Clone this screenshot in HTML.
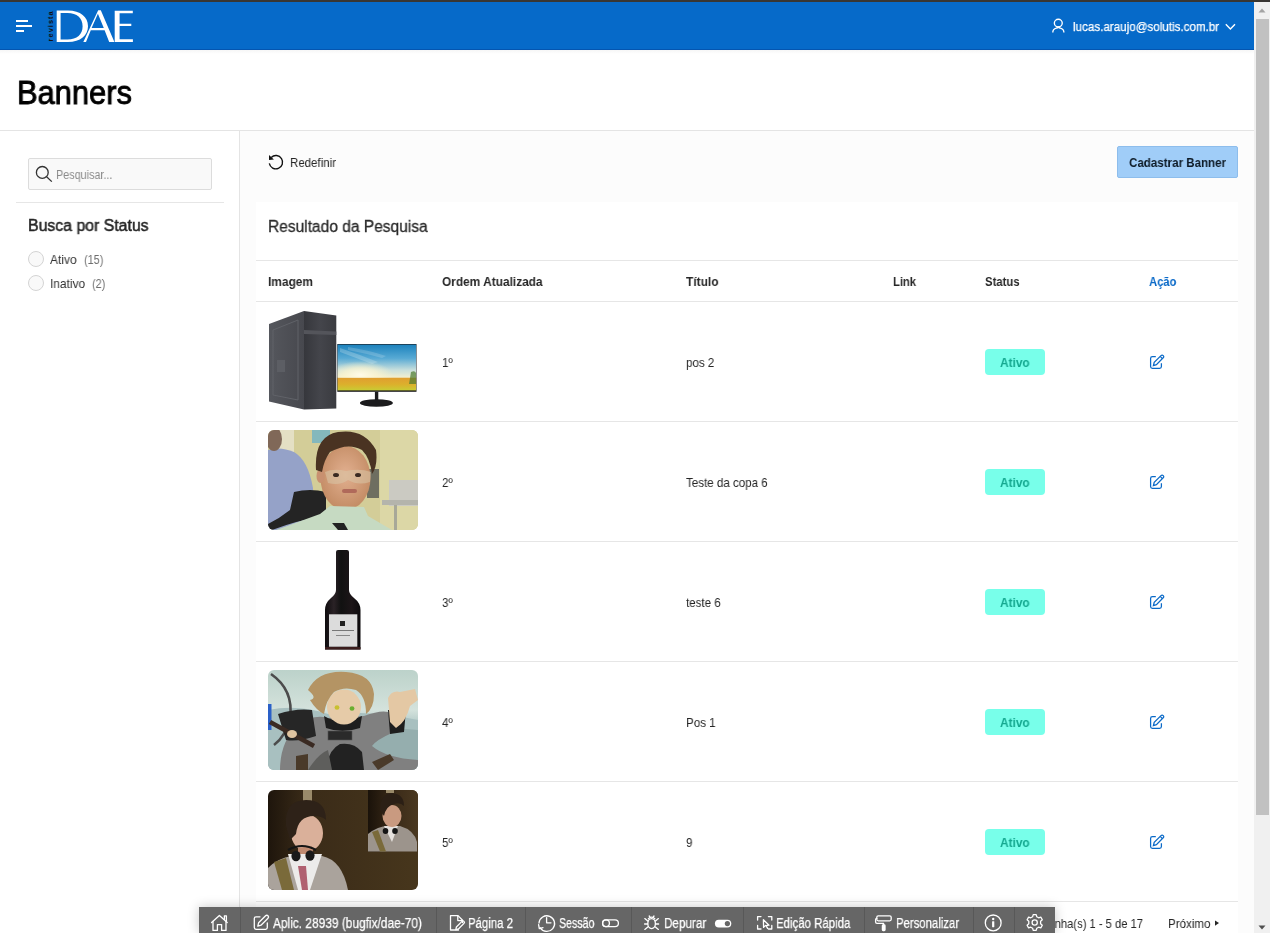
<!DOCTYPE html>
<html><head><meta charset="utf-8">
<style>
*{box-sizing:border-box;margin:0;padding:0}
html,body{width:1270px;height:933px;overflow:hidden;background:#fff;font-family:"Liberation Sans",sans-serif;color:#262626}
.abs{position:absolute}
.t{position:absolute;white-space:nowrap;line-height:1;transform-origin:0 0;will-change:transform}
svg{overflow:visible}
</style></head>
<body>
<div class="abs" style="left:0;top:0;width:1270px;height:2px;background:#383633"></div>
<div class="abs" style="left:0;top:50px;width:1254px;height:4px;background:linear-gradient(#f6f6f6,#fff)"></div>
<div class="abs" style="left:0;top:2px;width:1254px;height:48px;background:#066ac9;border-bottom:1px solid #0455b0"></div>
<div class="abs" style="left:16px;top:19.5px;width:12px;height:2px;background:#fff"></div>
<div class="abs" style="left:16px;top:25px;width:16px;height:2px;background:#fff"></div>
<div class="abs" style="left:16px;top:30px;width:8px;height:2px;background:#fff"></div>
<svg class="abs" style="left:46px;top:8px" width="90" height="36" viewBox="46 8 90 36">
<g fill="#fff">
<path d="M56.7 10.6 H68 C80.5 10.6 88 17.2 88 26.2 C88 35.3 80.5 41.9 68 41.9 H56.7 Z M60.6 13 V39.5 H67.5 C77 39.5 82.6 34.3 82.6 26.2 C82.6 18.1 77 13 67.5 13 Z"/>
<path d="M98.2 10.2 H100.8 L114.4 41.9 H109.2 L104.6 30.2 H90.8 L86 41.9 H83.3 Z M91.6 28.1 H103.8 L97.9 13.8 Z"/>
<path d="M114.7 10.7 H132.8 V13.2 H119.6 V23.8 H131.3 V26 H119.6 V39.3 H132.9 V41.9 H114.7 Z"/>
</g>
<text x="0" y="0" transform="translate(53.2 41.4) rotate(-90)" font-family="Liberation Sans" font-weight="bold" font-size="7.4" letter-spacing="1.05" fill="#111">revista</text>
</svg>
<svg class="abs" style="left:1048px;top:15px" width="20" height="22" viewBox="1048 15 20 22">
<g fill="none" stroke="#fff" stroke-width="1.35">
<ellipse cx="1058.3" cy="23.1" rx="3.95" ry="3.85"/>
<path d="M1052.8 32.6 C1052.8 29.6 1054.5 28.6 1056.3 28.2 C1057.2 28 1057.8 27.6 1058.3 27 C1058.8 27.6 1059.4 28 1060.3 28.2 C1062.1 28.6 1063.9 29.6 1063.9 32.6"/>
</g></svg>
<div class="t" style="left:1072.5px;top:21.2px;font-size:12.5px;color:#fff;transform:scaleX(0.93);-webkit-text-stroke:0.25px #fff;">lucas.araujo@solutis.com.br</div>

<svg class="abs" style="left:1222px;top:20px" width="16" height="14" viewBox="1222 20 16 14">
<path d="M1225.8 24.2 L1230.4 29 L1235 24.2" fill="none" stroke="#fff" stroke-width="1.4"/></svg>
<div class="abs" style="left:1254px;top:2px;width:16px;height:931px;background:#f0f0f0"></div>
<div class="abs" style="left:1256px;top:19px;width:13px;height:796px;background:#c1c1c1"></div>
<svg class="abs" style="left:1254px;top:2px" width="16" height="931" viewBox="0 0 16 931">
<path d="M4.5 10.5 L8 6.5 L11.5 10.5 Z" fill="#a3a3a3"/>
<path d="M4.5 923.5 L8 927.5 L11.5 923.5 Z" fill="#505050"/></svg>
<div class="abs" style="left:0;top:130px;width:1254px;height:1px;background:#e4e4e4"></div>
<div class="t" style="left:17.4px;top:75.7px;font-size:33px;color:#000;transform:scaleX(0.935);-webkit-text-stroke:0.9px #000;">Banners</div>

<div class="abs" style="left:239px;top:131px;width:1px;height:802px;background:#e4e4e4"></div>
<div class="abs" style="left:240px;top:131px;width:1014px;height:802px;background:#fcfcfc"></div>
<div class="abs" style="left:28px;top:158px;width:184px;height:32px;background:#f9f9f9;border:1px solid #dcdcdc;border-radius:2px"></div>
<svg class="abs" style="left:33px;top:163px" width="22" height="22" viewBox="33 163 22 22">
<g fill="none" stroke="#333" stroke-width="1.3"><circle cx="42.3" cy="172.4" r="5.9"/><path d="M46.6 176.7 L51.8 181.6"/></g></svg>
<div class="t" style="left:56.2px;top:168.8px;font-size:12px;color:#8a8a8a;transform:scaleX(0.9);">Pesquisar...</div>

<div class="abs" style="left:16px;top:202px;width:208px;height:1px;background:#e6e6e6"></div>
<div class="t" style="left:27.6px;top:217.5px;font-size:16px;color:#262626;transform:scaleX(0.99);-webkit-text-stroke:0.5px #262626;">Busca por Status</div>

<div class="abs" style="left:28px;top:251px;width:16px;height:16px;border:1px solid #d4d4d4;border-radius:50%;background:#f9f9f9"></div>
<div class="t" style="left:49.5px;top:253.0px;font-size:13px;color:#333;transform:scaleX(0.92);">Ativo</div>

<div class="t" style="left:83.5px;top:253.0px;font-size:13px;color:#6e6e6e;transform:scaleX(0.84);">(15)</div>

<div class="abs" style="left:28px;top:275px;width:16px;height:16px;border:1px solid #d4d4d4;border-radius:50%;background:#f9f9f9"></div>
<div class="t" style="left:49.5px;top:277.0px;font-size:13px;color:#333;transform:scaleX(0.92);">Inativo</div>

<div class="t" style="left:91.5px;top:277.0px;font-size:13px;color:#6e6e6e;transform:scaleX(0.84);">(2)</div>

<svg class="abs" style="left:264px;top:150px" width="24" height="24" viewBox="264 150 24 24">
<path d="M271.2 157.4 A6.7 6.7 0 1 1 269.3 163.4" fill="none" stroke="#111" stroke-width="1.35"/>
<path d="M269 155 L269 159.9 L273.9 159.5 Z" fill="#111"/></svg>
<div class="t" style="left:290.2px;top:155.9px;font-size:13px;color:#262626;transform:scaleX(0.885);">Redefinir</div>

<div class="abs" style="left:1117px;top:146px;width:121px;height:32px;background:#a0cdf8;border:1px solid #8dbdec;border-radius:2px"></div>
<div class="t" style="left:1128.8px;top:156.3px;font-size:13px;font-weight:bold;color:#0d1a26;transform:scaleX(0.89);">Cadastrar Banner</div>

<div class="abs" style="left:256px;top:202px;width:982px;height:731px;background:#fff"></div>
<div class="t" style="left:268.0px;top:218.5px;font-size:16px;color:#2b2b2b;transform:scaleX(0.97);-webkit-text-stroke:0.3px #2b2b2b;">Resultado da Pesquisa</div>

<div class="abs" style="left:256px;top:260px;width:982px;height:1px;background:#e6e6e6"></div>
<div class="abs" style="left:256px;top:301px;width:982px;height:1px;background:#e6e6e6"></div>
<div class="t" style="left:268.0px;top:275.3px;font-size:13px;font-weight:bold;color:#262626;transform:scaleX(0.916);">Imagem</div>

<div class="t" style="left:442.0px;top:275.3px;font-size:13px;font-weight:bold;color:#262626;transform:scaleX(0.914);">Ordem Atualizada</div>

<div class="t" style="left:686.0px;top:275.3px;font-size:13px;font-weight:bold;color:#262626;transform:scaleX(0.919);">Título</div>

<div class="t" style="left:893.0px;top:275.3px;font-size:13px;font-weight:bold;color:#262626;transform:scaleX(0.861);">Link</div>

<div class="t" style="left:985.0px;top:275.3px;font-size:13px;font-weight:bold;color:#262626;transform:scaleX(0.871);">Status</div>

<div class="t" style="left:1148.5px;top:275.3px;font-size:13px;font-weight:bold;color:#0b6ac8;transform:scaleX(0.865);">Ação</div>

<div class="abs" style="left:256px;top:421px;width:982px;height:1px;background:#e6e6e6"></div>
<div class="t" style="left:442.0px;top:356.1px;font-size:13px;color:#262626;transform:scaleX(0.89);">1º</div>

<div class="t" style="left:686.0px;top:356.1px;font-size:13px;color:#262626;transform:scaleX(0.89);">pos 2</div>

<div class="abs" style="left:985px;top:349px;width:60px;height:26px;background:#78ffea;border-radius:4px"></div>
<div class="t" style="left:1000.3px;top:357.0px;font-size:12.5px;font-weight:bold;color:#14a88f;transform:scaleX(0.95);">Ativo</div>

<svg class="abs" style="left:1146px;top:352px" width="22" height="22" viewBox="1146 352 22 22">
<g fill="none" stroke="#0b6ac8" stroke-width="1.25" transform="translate(0 0)">
<path d="M1155.8 356.6 H1152.4 Q1150.6 356.6 1150.6 358.4 V366.6 Q1150.6 368.4 1152.4 368.4 H1159.6 Q1161.4 368.4 1161.4 366.6 V363.2"/>
<path d="M1153.4 365.6 L1154.2 362.4 L1161 355.6 Q1162.1 354.5 1163.2 355.6 Q1164.3 356.7 1163.2 357.8 L1156.4 364.6 Z"/>
<path d="M1160.2 356.4 L1162.4 358.6"/>
</g></svg>
<div class="abs" style="left:256px;top:541px;width:982px;height:1px;background:#e6e6e6"></div>
<div class="t" style="left:442.0px;top:476.1px;font-size:13px;color:#262626;transform:scaleX(0.89);">2º</div>

<div class="t" style="left:686.0px;top:476.1px;font-size:13px;color:#262626;transform:scaleX(0.89);">Teste da copa 6</div>

<div class="abs" style="left:985px;top:469px;width:60px;height:26px;background:#78ffea;border-radius:4px"></div>
<div class="t" style="left:1000.3px;top:477.0px;font-size:12.5px;font-weight:bold;color:#14a88f;transform:scaleX(0.95);">Ativo</div>

<svg class="abs" style="left:1146px;top:472px" width="22" height="22" viewBox="1146 472 22 22">
<g fill="none" stroke="#0b6ac8" stroke-width="1.25" transform="translate(0 120)">
<path d="M1155.8 356.6 H1152.4 Q1150.6 356.6 1150.6 358.4 V366.6 Q1150.6 368.4 1152.4 368.4 H1159.6 Q1161.4 368.4 1161.4 366.6 V363.2"/>
<path d="M1153.4 365.6 L1154.2 362.4 L1161 355.6 Q1162.1 354.5 1163.2 355.6 Q1164.3 356.7 1163.2 357.8 L1156.4 364.6 Z"/>
<path d="M1160.2 356.4 L1162.4 358.6"/>
</g></svg>
<div class="abs" style="left:256px;top:661px;width:982px;height:1px;background:#e6e6e6"></div>
<div class="t" style="left:442.0px;top:596.1px;font-size:13px;color:#262626;transform:scaleX(0.89);">3º</div>

<div class="t" style="left:686.0px;top:596.1px;font-size:13px;color:#262626;transform:scaleX(0.89);">teste 6</div>

<div class="abs" style="left:985px;top:589px;width:60px;height:26px;background:#78ffea;border-radius:4px"></div>
<div class="t" style="left:1000.3px;top:597.0px;font-size:12.5px;font-weight:bold;color:#14a88f;transform:scaleX(0.95);">Ativo</div>

<svg class="abs" style="left:1146px;top:592px" width="22" height="22" viewBox="1146 592 22 22">
<g fill="none" stroke="#0b6ac8" stroke-width="1.25" transform="translate(0 240)">
<path d="M1155.8 356.6 H1152.4 Q1150.6 356.6 1150.6 358.4 V366.6 Q1150.6 368.4 1152.4 368.4 H1159.6 Q1161.4 368.4 1161.4 366.6 V363.2"/>
<path d="M1153.4 365.6 L1154.2 362.4 L1161 355.6 Q1162.1 354.5 1163.2 355.6 Q1164.3 356.7 1163.2 357.8 L1156.4 364.6 Z"/>
<path d="M1160.2 356.4 L1162.4 358.6"/>
</g></svg>
<div class="abs" style="left:256px;top:781px;width:982px;height:1px;background:#e6e6e6"></div>
<div class="t" style="left:442.0px;top:716.1px;font-size:13px;color:#262626;transform:scaleX(0.89);">4º</div>

<div class="t" style="left:686.0px;top:716.1px;font-size:13px;color:#262626;transform:scaleX(0.89);">Pos 1</div>

<div class="abs" style="left:985px;top:709px;width:60px;height:26px;background:#78ffea;border-radius:4px"></div>
<div class="t" style="left:1000.3px;top:717.0px;font-size:12.5px;font-weight:bold;color:#14a88f;transform:scaleX(0.95);">Ativo</div>

<svg class="abs" style="left:1146px;top:712px" width="22" height="22" viewBox="1146 712 22 22">
<g fill="none" stroke="#0b6ac8" stroke-width="1.25" transform="translate(0 360)">
<path d="M1155.8 356.6 H1152.4 Q1150.6 356.6 1150.6 358.4 V366.6 Q1150.6 368.4 1152.4 368.4 H1159.6 Q1161.4 368.4 1161.4 366.6 V363.2"/>
<path d="M1153.4 365.6 L1154.2 362.4 L1161 355.6 Q1162.1 354.5 1163.2 355.6 Q1164.3 356.7 1163.2 357.8 L1156.4 364.6 Z"/>
<path d="M1160.2 356.4 L1162.4 358.6"/>
</g></svg>
<div class="abs" style="left:256px;top:901px;width:982px;height:1px;background:#e6e6e6"></div>
<div class="t" style="left:442.0px;top:836.1px;font-size:13px;color:#262626;transform:scaleX(0.89);">5º</div>

<div class="t" style="left:686.0px;top:836.1px;font-size:13px;color:#262626;transform:scaleX(0.89);">9</div>

<div class="abs" style="left:985px;top:829px;width:60px;height:26px;background:#78ffea;border-radius:4px"></div>
<div class="t" style="left:1000.3px;top:837.0px;font-size:12.5px;font-weight:bold;color:#14a88f;transform:scaleX(0.95);">Ativo</div>

<svg class="abs" style="left:1146px;top:832px" width="22" height="22" viewBox="1146 832 22 22">
<g fill="none" stroke="#0b6ac8" stroke-width="1.25" transform="translate(0 480)">
<path d="M1155.8 356.6 H1152.4 Q1150.6 356.6 1150.6 358.4 V366.6 Q1150.6 368.4 1152.4 368.4 H1159.6 Q1161.4 368.4 1161.4 366.6 V363.2"/>
<path d="M1153.4 365.6 L1154.2 362.4 L1161 355.6 Q1162.1 354.5 1163.2 355.6 Q1164.3 356.7 1163.2 357.8 L1156.4 364.6 Z"/>
<path d="M1160.2 356.4 L1162.4 358.6"/>
</g></svg>
<svg class="abs" style="left:268px;top:310px" width="150" height="100" viewBox="0 0 150 100">
<defs>
<linearGradient id="scr" x1="0" y1="0" x2="0" y2="1">
<stop offset="0" stop-color="#1c82bd"/><stop offset=".3" stop-color="#58aad4"/><stop offset=".55" stop-color="#c6dedc"/><stop offset=".71" stop-color="#f0eed0"/><stop offset=".74" stop-color="#e0a030"/><stop offset=".87" stop-color="#dcb02c"/><stop offset="1" stop-color="#c8cc34"/>
</linearGradient>
<radialGradient id="sun" cx=".29" cy=".92" r=".42"><stop offset="0" stop-color="#fffbe8"/><stop offset=".5" stop-color="#fff6d0" stop-opacity=".7"/><stop offset="1" stop-color="#fff6d0" stop-opacity="0"/></radialGradient>
<linearGradient id="side" x1="0" y1="0" x2="1" y2="0"><stop offset="0" stop-color="#55575d"/><stop offset="1" stop-color="#47484e"/></linearGradient>
<linearGradient id="front" x1="0" y1="0" x2="1" y2="0"><stop offset="0" stop-color="#36373c"/><stop offset=".5" stop-color="#44454b"/><stop offset="1" stop-color="#3a3b40"/></linearGradient>
</defs>
<polygon points="1,14 36,1 36,99.5 1,91.5" fill="url(#side)"/>
<polygon points="5,20 30,10 30,90 5,85" fill="none" stroke="#606268" stroke-width="1"/>
<rect x="9" y="50" width="8" height="12" fill="#5c5e64"/>
<polygon points="36,1 68.3,5.5 68.3,98.5 36,99.5" fill="url(#front)"/>
<polygon points="36,20 68.3,21.5 68.3,25 36,24" fill="#54555b"/>
<rect x="69.3" y="34" width="79.2" height="47.8" fill="#1b1b1d"/>
<rect x="69.6" y="34.6" width="78.5" height="45.8" fill="url(#scr)"/>
<rect x="69.6" y="34.6" width="78.5" height="33" fill="url(#sun)"/>
<path d="M72 38 Q90 44 110 52 L104 54 Q88 48 72 42 Z" fill="#e8f2f4" opacity=".25"/>
<path d="M80 37 Q100 40 118 46 L114 48 Q96 43 80 40 Z" fill="#e8f2f4" opacity=".2"/>
<path d="M143 62 Q147 60 148 63 L148 74 L141 74 Z" fill="#4a7a30" opacity=".7"/>
<rect x="106.9" y="81.8" width="3.4" height="9" fill="#1b1b1d"/>
<ellipse cx="108.4" cy="93" rx="16.5" ry="3.8" fill="#1b1b1d"/>
</svg>

<svg class="abs" style="left:268px;top:430px" width="150" height="100" viewBox="0 0 150 100">
<defs><clipPath id="c2"><rect x="0" y="0" width="150" height="100" rx="6"/></clipPath>
<radialGradient id="face2" cx=".5" cy=".45" r=".6"><stop offset="0" stop-color="#e2b090"/><stop offset="1" stop-color="#c08860"/></radialGradient></defs>
<g clip-path="url(#c2)">
<rect width="150" height="100" fill="#d3cd98"/>
<rect x="10" y="0" width="16" height="60" fill="#e4e0c4"/>
<rect x="112" y="0" width="38" height="100" fill="#dcd7a6"/>
<rect x="44" y="0" width="18" height="13" fill="#84b8bc"/>
<path d="M0 20 Q12 16 26 22 Q40 30 45 58 L46 100 L0 100 Z" fill="#95a2c8"/>
<ellipse cx="6" cy="9" rx="8" ry="12" fill="#806858"/>
<path d="M26 62 Q42 58 58 62 L58 86 Q30 90 4 100 L0 100 L0 94 Q12 88 22 80 Z" fill="#242424"/>
<rect x="99" y="39" width="12" height="29" fill="#6e6e60"/>
<rect x="121" y="50" width="29" height="26" fill="#cbcac2"/>
<rect x="114" y="70" width="36" height="5" fill="#b4b4ac"/>
<rect x="126" y="75" width="3" height="25" fill="#a8a898"/>
<ellipse cx="77.5" cy="48" rx="25" ry="32" fill="url(#face2)"/>
<ellipse cx="52.5" cy="46" rx="4" ry="7" fill="#c89070"/>
<path d="M48 40 Q46 6 70 2 Q96 -2 108 20 Q110 36 104 44 Q102 28 94 20 Q80 12 62 22 Q56 30 54 42 Z" fill="#4a3322"/>
<path d="M57 42 Q66 38 78 41 Q92 38 103 42 L102 52 Q90 56 80 50 Q72 56 60 53 Z" fill="#d9c7a8" opacity=".55"/>
<ellipse cx="68" cy="45" rx="3" ry="2" fill="#3a2a22"/><ellipse cx="90" cy="45" rx="3" ry="2" fill="#3a2a22"/>
<rect x="74" y="59" width="15" height="4" rx="2" fill="#b06a5a"/>
<path d="M8 100 L52 84 L62 76 L96 77 L100 86 L124 100 Z" fill="#c6dac2"/>
<path d="M64 93 L70 100 L80 100 L76 93 Z" fill="#222"/>
</g></svg>

<svg class="abs" style="left:268px;top:550px" width="150" height="100" viewBox="0 0 150 100">
<defs><linearGradient id="bt" x1="0" y1="0" x2="1" y2="0"><stop offset="0" stop-color="#0e0c0e"/><stop offset=".25" stop-color="#2a2226"/><stop offset=".45" stop-color="#111"/><stop offset=".75" stop-color="#1c1518"/><stop offset="1" stop-color="#0c0a0c"/></linearGradient></defs>
<path d="M68 2 Q68 0 70 0 H79 Q81 0 81 2 V40 Q81 44 86 48 Q92.5 53 92.5 60 V99.5 H57 V60 Q57 53 63 48 Q68 44 68 40 Z" fill="url(#bt)"/>
<rect x="61" y="64.3" width="28.3" height="32.4" fill="#dcdcdc"/>
<rect x="72" y="71" width="5" height="5" fill="#222"/>
<rect x="64" y="80" width="22" height="1" fill="#777"/>
<rect x="68" y="85" width="14" height="1" fill="#888"/>
<rect x="57" y="97" width="35.5" height="2.5" fill="#3a1c1c"/>
</svg>

<svg class="abs" style="left:268px;top:670px" width="150" height="100" viewBox="0 0 150 100">
<defs><clipPath id="c4"><rect x="0" y="0" width="150" height="100" rx="6"/></clipPath>
<linearGradient id="sky4" x1="0" y1="0" x2="0" y2="1"><stop offset="0" stop-color="#bcd2ca"/><stop offset=".4" stop-color="#d4e2dc"/><stop offset=".55" stop-color="#b0c8c6"/><stop offset="1" stop-color="#9cb4b4"/></linearGradient></defs>
<g clip-path="url(#c4)">
<rect width="150" height="100" fill="url(#sky4)"/>
<path d="M0 40 Q30 34 60 44 Q100 40 150 50 L150 100 L0 100 Z" fill="#a8c0c0"/>
<path d="M90 62 Q120 56 150 60 L150 100 L90 100 Z" fill="#95aeae"/>
<rect x="0" y="34" width="3.5" height="26" fill="#2a60c8"/>
<path d="M3 4 Q26 20 22 48 Q18 66 6 75" fill="none" stroke="#4c4c4c" stroke-width="2.6"/>
<path d="M12 100 Q12 72 30 54 Q46 44 60 48 L96 46 Q112 40 120 42 L126 62 Q108 70 104 76 Q118 88 150 90 L150 100 Z" fill="#808080"/>
<path d="M10 44 Q28 38 44 40 L48 66 Q30 72 18 70 Z" fill="#262626"/>
<path d="M2 52 L46 76" stroke="#3a2a22" stroke-width="4.5"/>
<ellipse cx="24" cy="64" rx="5" ry="4" fill="#e0c4a0"/>
<path d="M58 100 Q60 80 72 74 Q86 72 94 82 L96 100 Z" fill="#222"/>
<path d="M40 100 Q50 84 60 80 L64 100 Z" fill="#5e5e5c"/>
<path d="M56 46 Q72 56 94 46 L92 58 Q74 64 58 58 Z" fill="#1e1e1e"/>
<rect x="60" y="61" width="24" height="9" fill="#2a2a2a" stroke="#555" stroke-width=".6"/>
<path d="M120 40 L138 40 L136 62 L122 64 Z" fill="#1e1e1e"/>
<path d="M120 28 Q124 20 132 22 L147 19 L150 30 L142 36 Q138 52 128 58 L122 52 Z" fill="#e4c8a4"/>
<ellipse cx="76" cy="37" rx="17" ry="17.5" fill="#e6cba8"/>
<path d="M40 20 Q50 0 78 2 Q104 4 106 24 Q106 38 98 44 Q98 26 88 20 Q76 16 66 22 Q58 30 56 44 Q48 40 42 30 Q50 28 40 20 Z" fill="#b49464"/>
<ellipse cx="69" cy="37.5" rx="2.4" ry="2.2" fill="#c8c030"/><ellipse cx="84" cy="38.5" rx="2.4" ry="2.2" fill="#6aae30"/>
<path d="M28 86 L40 84 L40 100 L28 100 Z" fill="#4a3a2a"/>
<path d="M104 92 L122 84 L126 90 L110 100 Z" fill="#4a3a2a"/>
</g></svg>

<svg class="abs" style="left:268px;top:790px" width="150" height="100" viewBox="0 0 150 100">
<defs><clipPath id="c5"><rect x="0" y="0" width="150" height="100" rx="6"/></clipPath>
<linearGradient id="bg5" x1="0" y1="0" x2="1" y2="0"><stop offset="0" stop-color="#1e150c"/><stop offset=".25" stop-color="#3a2b18"/><stop offset="1" stop-color="#47361c"/></linearGradient>
<linearGradient id="bg5b" x1="0" y1="0" x2="1" y2="0"><stop offset="0" stop-color="#1a120a"/><stop offset=".5" stop-color="#3a2a18"/><stop offset="1" stop-color="#4a3820"/></linearGradient></defs>
<g clip-path="url(#c5)">
<rect width="150" height="100" fill="url(#bg5)"/>
<rect x="35" y="0" width="9" height="11" fill="#9a8a6a"/>
<rect x="100" y="0" width="50" height="61.5" fill="url(#bg5b)"/>
<rect x="118" y="0" width="8" height="3" fill="#9a8a6a"/>
<path d="M100 61.5 L100 44 Q110 36 120 36 L132 36 Q146 40 149 52 L149 61.5 Z" fill="#9c948c"/>
<path d="M116 36 L124 52 L130 36 Z" fill="#e6e2de"/>
<path d="M104 42 L110 40 L118 61.5 L112 61.5 Z" fill="#7a6a3a"/>
<ellipse cx="124" cy="26" rx="9.5" ry="11" fill="#c99a80"/>
<path d="M112 20 Q112 4 124 3 Q136 4 136 16 Q132 12 126 14 Q118 16 116 26 Z" fill="#2b1f15"/>
<ellipse cx="117.5" cy="41" rx="2.8" ry="3" fill="#151515"/><ellipse cx="127" cy="41" rx="2.8" ry="3" fill="#151515"/>
<ellipse cx="39" cy="43" rx="16" ry="18.5" fill="#dab09a"/>
<path d="M18 36 Q16 10 38 10 Q58 10 58 30 Q54 26 46 26 Q30 26 28 44 L22 50 Z" fill="#2e2218"/>
<path d="M30 58 L44 56 L46 68 L30 70 Z" fill="#c08a70"/>
<path d="M0 100 L0 78 Q10 68 24 66 L54 66 Q74 70 80 100 Z" fill="#aaa39c"/>
<path d="M20 64 L54 64 L42 100 L30 100 Z" fill="#ecebea"/>
<path d="M6 72 L18 68 L26 100 L14 100 Z" fill="#7a6a3a"/>
<path d="M30 76 L38 76 L40 100 L34 100 Z" fill="#b06070"/>
<path d="M20 60 Q34 52 48 60" fill="none" stroke="#151515" stroke-width="2.2"/><ellipse cx="28" cy="66" rx="4.6" ry="5.2" fill="#1a1a1a"/><ellipse cx="42" cy="65.5" rx="4.6" ry="5.2" fill="#1a1a1a"/>
</g></svg>

<div class="t" style="left:1046.0px;top:917.0px;font-size:13px;color:#262626;transform:scaleX(0.86);">Linha(s) 1 - 5 de 17</div>

<div class="t" style="left:1167.5px;top:917.0px;font-size:13px;color:#262626;transform:scaleX(0.89);">Próximo</div>

<svg class="abs" style="left:1213px;top:918px" width="8" height="10" viewBox="1213 918 8 10"><path d="M1215 920.4 L1219 923 L1215 925.7 Z" fill="#262626"/></svg>
<div class="abs" style="left:199px;top:907px;width:856px;height:26px;background:#666;box-shadow:0 0 12px rgba(0,0,0,.22)"></div>
<div class="abs" style="left:240px;top:907px;width:1px;height:26px;background:#585858"></div>
<div class="abs" style="left:435.5px;top:907px;width:1px;height:26px;background:#585858"></div>
<div class="abs" style="left:525px;top:907px;width:1px;height:26px;background:#585858"></div>
<div class="abs" style="left:631px;top:907px;width:1px;height:26px;background:#585858"></div>
<div class="abs" style="left:743px;top:907px;width:1px;height:26px;background:#585858"></div>
<div class="abs" style="left:864px;top:907px;width:1px;height:26px;background:#585858"></div>
<div class="abs" style="left:972.5px;top:907px;width:1px;height:26px;background:#585858"></div>
<div class="abs" style="left:1014px;top:907px;width:1px;height:26px;background:#585858"></div>
<div class="t" style="left:273.0px;top:916.1px;font-size:14px;color:#fff;transform:scaleX(0.85);-webkit-text-stroke:0.25px #fff;">Aplic. 28939 (bugfix/dae-70)</div>

<div class="t" style="left:468.0px;top:916.1px;font-size:14px;color:#fff;transform:scaleX(0.814);-webkit-text-stroke:0.25px #fff;">Página 2</div>

<div class="t" style="left:558.5px;top:916.1px;font-size:14px;color:#fff;transform:scaleX(0.76);-webkit-text-stroke:0.25px #fff;">Sessão</div>

<div class="t" style="left:664.2px;top:916.1px;font-size:14px;color:#fff;transform:scaleX(0.834);-webkit-text-stroke:0.25px #fff;">Depurar</div>

<div class="t" style="left:776.0px;top:916.1px;font-size:14px;color:#fff;transform:scaleX(0.817);-webkit-text-stroke:0.25px #fff;">Edição Rápida</div>

<div class="t" style="left:896.3px;top:916.1px;font-size:14px;color:#fff;transform:scaleX(0.811);-webkit-text-stroke:0.25px #fff;">Personalizar</div>

<svg class="abs" style="left:199px;top:907px" width="856" height="26" viewBox="199 907 856 26">
<g fill="none" stroke="#fff" stroke-width="1.3" stroke-linejoin="round" stroke-linecap="round">
<!-- home -->
<path d="M211.6 922.6 L219.4 915.4 L227.2 922.6"/>
<path d="M213 921.4 V930.4 H217.4 V924.6 H221.6 V930.4 H226 V921.4"/>
<path d="M224.4 919.4 V915.8 H226.4 V921"/>
<!-- edit -->
<path d="M260 916.8 H256 Q254.3 916.8 254.3 918.5 V927.6 Q254.3 929.3 256 929.3 H265.6 Q267.3 929.3 267.3 927.6 V923"/>
<path d="M257.8 926.2 L258.6 922.8 L265.6 915.8 Q266.8 914.6 268 915.8 Q269.2 917 268 918.2 L261 925.2 Z"/>
<!-- page -->
<path d="M458.5 930 H450.5 V915.6 H458 L462.6 920.2 V922.6"/>
<path d="M457.8 915.8 V920.6 H462.4"/>
<path d="M455.8 929.6 L456.4 927 L462 921.4 Q463 920.4 464 921.4 Q465 922.4 464 923.4 L458.4 929 Z"/>
<!-- clock -->
<path d="M540.2 927.8 A7.8 7.8 0 1 0 539 923"/>
<path d="M538.6 924.6 L539.3 928.6 L543 927.6"/>
<path d="M546.6 917.6 V922.8 H551"/>
<!-- session toggle -->
<rect x="602.6" y="919.8" width="15.8" height="6.8" rx="3.4"/>
<circle cx="606" cy="923.2" r="3.4"/>
<!-- bug -->
<ellipse cx="651.6" cy="923.6" rx="3.8" ry="5"/>
<path d="M648.4 918.8 Q651.6 915.6 654.8 918.8"/>
<path d="M647.8 921 L644.8 918.6 M655.4 921 L658.4 918.6 M647.6 924 H644.6 M655.6 924 H658.6 M647.8 927 L644.8 929.4 M655.4 927 L658.4 929.4 M649.2 916 L650.2 917.4 M654 916 L653 917.4"/>
<!-- quick edit dashed box -->
<path d="M757.6 920 V916.6 H761 M768.4 916.6 H771.8 V920 M771.8 925.4 V929 H768.4 M761 929 H757.6 V925.4" />
<path d="M763.4 919.8 L769 925.2 L766 925.6 L767.6 928.4 M763.4 919.8 L763.6 927.4 L765.6 925.4" />
<!-- brush -->
<rect x="876.8" y="915.8" width="14.4" height="5" rx="1.5"/>
<path d="M876.8 918.4 Q875.6 918.4 875.6 919.6 V922 Q875.6 923.4 877 923.4 H883.6 V925"/>
<rect x="882.4" y="925" width="2.6" height="5.6" rx="0.8" fill="#fff"/>
<!-- info -->
<circle cx="993.2" cy="922.9" r="7.9"/>
<!-- gear -->
<circle cx="1034.7" cy="922.5" r="2.6"/>
<path d="M1033.2 914.6 H1036.2 L1036.8 916.8 L1038.6 917.8 L1040.8 917.1 L1042.3 919.7 L1040.6 921.2 V923.8 L1042.3 925.3 L1040.8 927.9 L1038.6 927.2 L1036.8 928.2 L1036.2 930.4 H1033.2 L1032.6 928.2 L1030.8 927.2 L1028.6 927.9 L1027.1 925.3 L1028.8 923.8 V921.2 L1027.1 919.7 L1028.6 917.1 L1030.8 917.8 L1032.6 916.8 Z"/>
</g>
<g fill="#fff">
<circle cx="993.2" cy="919" r="1.2"/>
<rect x="992.1" y="921.2" width="2.2" height="6" rx="0.4"/>
<!-- debug toggle filled -->
<rect x="714.9" y="919.7" width="16.4" height="7.8" rx="3.9"/>
</g>
<circle cx="727.4" cy="923.6" r="2.6" fill="#666"/>
</svg>

</body></html>
